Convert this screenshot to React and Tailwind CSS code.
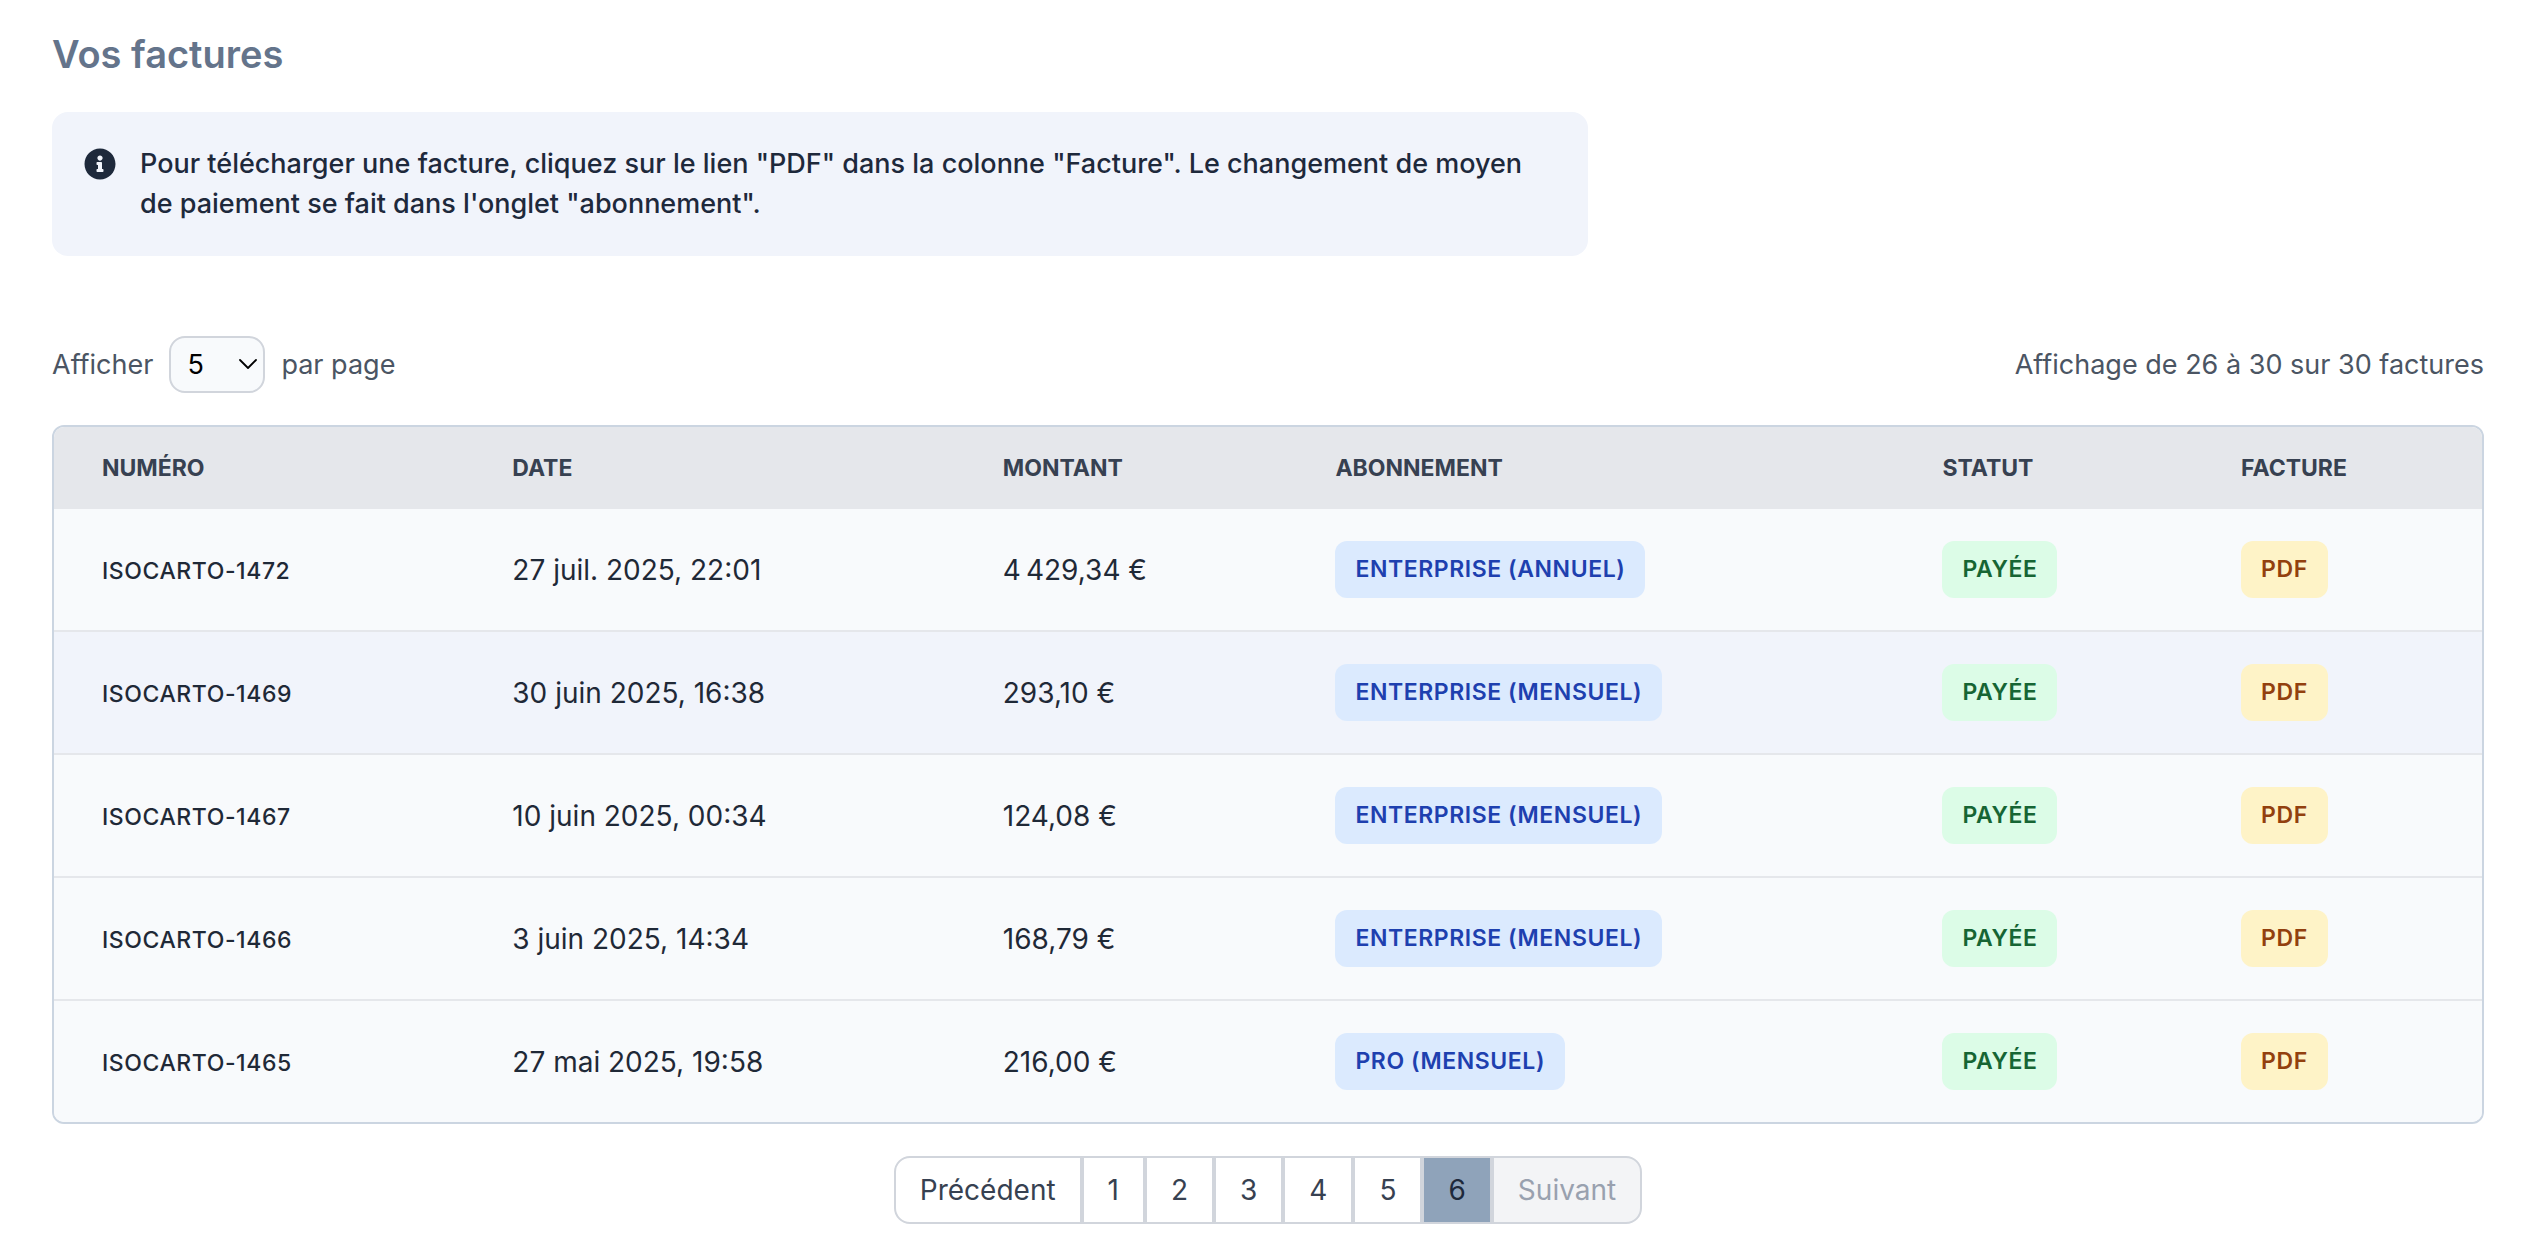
import React, {useState} from 'react'
import { FaInfoCircle } from 'react-icons/fa'

const PAGE_SIZES = [5, 10, 25, 50]
const PAGES = [1, 2, 3, 4, 5, 6]
const TOTAL = 30

const COLUMNS = [
  {label: 'Numéro', width: 'w-[16.9%]'},
  {label: 'Date', width: 'w-[20.2%]'},
  {label: 'Montant', width: 'w-[13.7%]'},
  {label: 'Abonnement', width: 'w-[25%]'},
  {label: 'Statut', width: 'w-[12.3%]'},
  {label: 'Facture', width: 'w-[11.9%]'},
]

const INVOICES = [
  {id: 'ISOCARTO-1472', date: '27 juil. 2025, 22:01', amount: '4\u202f429,34 €', plan: 'Enterprise (annuel)'},
  {id: 'ISOCARTO-1469', date: '30 juin 2025, 16:38', amount: '293,10 €', plan: 'Enterprise (mensuel)', active: true},
  {id: 'ISOCARTO-1467', date: '10 juin 2025, 00:34', amount: '124,08 €', plan: 'Enterprise (mensuel)'},
  {id: 'ISOCARTO-1466', date: '3 juin 2025, 14:34', amount: '168,79 €', plan: 'Enterprise (mensuel)'},
  {id: 'ISOCARTO-1465', date: '27 mai 2025, 19:58', amount: '216,00 €', plan: 'Pro (mensuel)'},
]

const BADGE = 'inline-block rounded-xl px-5 py-3 align-top text-[23px] leading-[33px] font-semibold uppercase tracking-wide'
const PAGE_BUTTON = 'border-2 border-gray-300 px-6 py-3 text-[28px] leading-[40px]'

function InvoiceRow({invoice}){
  return (
    <tr className={invoice.active ? 'bg-[#f1f4fb]' : 'bg-[#f8fafc]'}>
      <td className="px-12 py-8">
        <span className="text-[23px] font-medium tracking-wide">{invoice.id}</span>
      </td>
      <td className="px-12 py-8">{invoice.date}</td>
      <td className="px-12 py-8">{invoice.amount}</td>
      <td className="px-12 py-8">
        <span className={`${BADGE} bg-[#dbeafe] text-[#1e40af]`}>{invoice.plan}</span>
      </td>
      <td className="px-12 py-8">
        <span className={`${BADGE} bg-[#dcfce7] text-[#166534]`}>Payée</span>
      </td>
      <td className="px-12 py-8">
        <a href="#pdf" className={`${BADGE} bg-[#fef3c7] text-[#92400e]`}>PDF</a>
      </td>
    </tr>
  )
}

function Pagination({page, onChange}){
  const last = PAGES[PAGES.length - 1]

  return (
    <nav className="mt-8 flex justify-center text-[#374151]" aria-label="Pagination">
      <button type="button" disabled={page === 1} onClick={() => onChange(page - 1)} className={`${PAGE_BUTTON} rounded-l-2xl bg-white disabled:bg-gray-100 disabled:text-gray-400`}>
        Précédent
      </button>
      {PAGES.map(n => (
        <button
          key={n}
          type="button"
          onClick={() => onChange(n)}
          aria-current={n === page ? 'page' : undefined}
          className={`${PAGE_BUTTON} ${n === page ? 'bg-[#8fa3ba] text-[#1e293b]' : 'bg-white'}`}
        >
          {n}
        </button>
      ))}
      <button type="button" disabled={page === last} onClick={() => onChange(page + 1)} className={`${PAGE_BUTTON} rounded-r-2xl bg-white disabled:bg-gray-100 disabled:text-gray-400`}>
        Suivant
      </button>
    </nav>
  )
}

export default function App(){
  const [page, setPage] = useState(6)
  const [pageSize, setPageSize] = useState(5)

  const first = (page - 1) * 5 + 1

  return (
    <main className="bg-white pt-7 pr-14 pb-6 pl-[52px] font-['Inter',sans-serif] text-[28px] leading-[40px] text-[#1f2937]">
      <h1 className="text-[38px] leading-[52px] font-semibold text-[#64748b]">Vos factures</h1>

      <div className="mt-8 flex max-w-[1536px] gap-6 rounded-2xl bg-[#f1f4fb] p-8 text-[27px] font-medium text-[#1e293b]">
        <FaInfoCircle className="mt-1 h-8 w-8 shrink-0" aria-hidden="true" />
        <p>Pour télécharger une facture, cliquez sur le lien "PDF" dans la colonne "Facture". Le changement de moyen de paiement se fait dans l'onglet "abonnement".</p>
      </div>

      <div className="mt-20 flex items-center justify-between text-[27px] text-[#4b5563]">
        <div className="flex items-center gap-4">
          <label htmlFor="page-size">Afficher</label>
          <div className="relative">
            <select
              id="page-size"
              value={pageSize}
              onChange={event => setPageSize(Number(event.target.value))}
              className="block h-[57px] w-24 appearance-none rounded-2xl border-2 border-gray-300 bg-[#f8fafc] pl-4 text-black"
            >
              {PAGE_SIZES.map(size => <option key={size} value={size}>{size}</option>)}
            </select>
            <svg viewBox="0 0 18 10" className="pointer-events-none absolute top-[23px] right-2 h-[10px] w-[18px] text-black" fill="none" stroke="currentColor" strokeWidth="1.8" strokeLinecap="round" strokeLinejoin="round" aria-hidden="true">
              <path d="M1 1 9 9l8-8" />
            </svg>
          </div>
          <span>par page</span>
        </div>
        <p>Affichage de {first} à {first + 4} sur {TOTAL} factures</p>
      </div>

      <div className="mt-8 overflow-hidden rounded-xl border-2 border-[#cbd5e1]">
        <table className="w-full table-fixed text-left">
          <thead className="bg-gray-200 text-[23px] leading-[34px] text-[#374151] uppercase">
            <tr>
              {COLUMNS.map(col => (
                <th key={col.label} scope="col" className={`${col.width} px-12 py-6 font-bold`}>{col.label}</th>
              ))}
            </tr>
          </thead>
          <tbody className="divide-y-2 divide-gray-200">
            {INVOICES.map(invoice => <InvoiceRow key={invoice.id} invoice={invoice} />)}
          </tbody>
        </table>
      </div>

      <Pagination page={page} onChange={setPage} />
    </main>
  )
}
